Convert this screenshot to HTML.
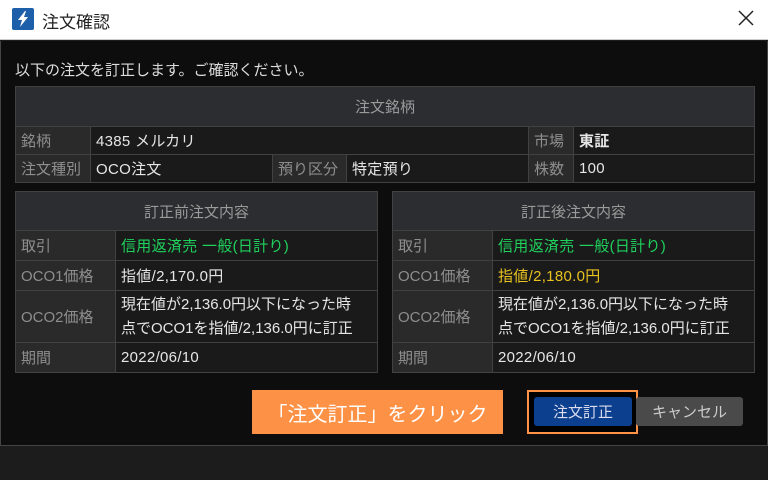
<!DOCTYPE html>
<html><head><meta charset="utf-8"><style>
*{margin:0;padding:0;box-sizing:border-box}
body{width:768px;height:480px;background:#1c1c1c;font-family:"Liberation Sans","Noto Sans CJK JP",sans-serif;position:relative;overflow:hidden;font-size:15px}
.a{position:absolute}
.c{position:absolute;display:flex;align-items:center;padding-left:5px;border:1px solid #414141;white-space:nowrap;overflow:hidden}
.l{background:#2a2a2b;color:#8e8e8e}
.v{background:#1a1a1a;color:#e6e6e6;letter-spacing:0.3px}
.h{background:#2c2d30;color:#9a9a9a;justify-content:center;padding:0}
.g{color:#1fd15c}.y{color:#e8c21f}
</style></head><body>
<div class="a" style="left:0;top:0;width:768px;height:40px;background:#fff;border-bottom:1px solid #ccc"></div>
<svg class="a" style="left:12px;top:8px" width="22" height="22" viewBox="0 0 22 22"><rect width="22" height="22" rx="2" fill="#1d5fa8"/><path d="M13 3 L6 12 H10 L8 19 L16 9 H12 L14 3Z" fill="#fff"/></svg>
<div class="a" style="left:42px;top:8px;font-size:17px;color:#222">注文確認</div>
<svg class="a" style="left:738px;top:10px" width="16" height="16" viewBox="0 0 16 16"><path d="M1 1L15 15M15 1L1 15" stroke="#222" stroke-width="1.5"/></svg>
<div class="a" style="left:0;top:41px;width:768px;height:405px;background:#0d0d0d;border:1px solid #444;border-top:none"></div>
<div class="a" style="left:15px;top:59px;color:#ddd">以下の注文を訂正します。ご確認ください。</div>

<div class="c h" style="left:15px;top:86px;width:740px;height:41px">注文銘柄</div>
<div class="c l" style="left:15px;top:126px;width:76px;height:29px">銘柄</div>
<div class="c v" style="left:90px;top:126px;width:439px;height:29px">4385 メルカリ</div>
<div class="c l" style="left:528px;top:126px;width:46px;height:29px">市場</div>
<div class="c v" style="left:573px;top:126px;width:182px;height:29px;font-weight:bold">東証</div>
<div class="c l" style="left:15px;top:154px;width:76px;height:29px">注文種別</div>
<div class="c v" style="left:90px;top:154px;width:183px;height:29px">OCO注文</div>
<div class="c l" style="left:272px;top:154px;width:75px;height:29px">預り区分</div>
<div class="c v" style="left:346px;top:154px;width:183px;height:29px">特定預り</div>
<div class="c l" style="left:528px;top:154px;width:46px;height:29px">株数</div>
<div class="c v" style="left:573px;top:154px;width:182px;height:29px">100</div>

<div class="c h" style="left:15px;top:191px;width:363px;height:40px">訂正前注文内容</div>
<div class="c l" style="left:15px;top:230px;width:101px;height:31px">取引</div>
<div class="c v g" style="left:115px;top:230px;width:263px;height:31px">信用返済売 一般(日計り)</div>
<div class="c l" style="left:15px;top:260px;width:101px;height:31px">OCO1価格</div>
<div class="c v" style="left:115px;top:260px;width:263px;height:31px">指値/2,170.0円</div>
<div class="c l" style="left:15px;top:290px;width:101px;height:53px">OCO2価格</div>
<div class="c v" style="left:115px;top:290px;width:263px;height:53px;line-height:24px;letter-spacing:0">現在値が2,136.0円以下になった時<br>点でOCO1を指値/2,136.0円に訂正</div>
<div class="c l" style="left:15px;top:342px;width:101px;height:31px">期間</div>
<div class="c v" style="left:115px;top:342px;width:263px;height:31px">2022/06/10</div>

<div class="c h" style="left:392px;top:191px;width:363px;height:40px">訂正後注文内容</div>
<div class="c l" style="left:392px;top:230px;width:101px;height:31px">取引</div>
<div class="c v g" style="left:492px;top:230px;width:263px;height:31px">信用返済売 一般(日計り)</div>
<div class="c l" style="left:392px;top:260px;width:101px;height:31px">OCO1価格</div>
<div class="c v y" style="left:492px;top:260px;width:263px;height:31px">指値/2,180.0円</div>
<div class="c l" style="left:392px;top:290px;width:101px;height:53px">OCO2価格</div>
<div class="c v" style="left:492px;top:290px;width:263px;height:53px;line-height:24px;letter-spacing:0">現在値が2,136.0円以下になった時<br>点でOCO1を指値/2,136.0円に訂正</div>
<div class="c l" style="left:392px;top:342px;width:101px;height:31px">期間</div>
<div class="c v" style="left:492px;top:342px;width:263px;height:31px">2022/06/10</div>

<div class="a" style="left:252px;top:390px;width:251px;height:44px;background:#fd9246;color:#fff;font-size:20px;display:flex;align-items:center;justify-content:center">「注文訂正」をクリック</div>
<div class="a" style="left:527px;top:390px;width:111px;height:44px;border:2px solid #fd9246;background:#000"></div>
<div class="a" style="left:534px;top:397px;width:98px;height:29px;background:#0d3f8f;border-radius:3px;color:#dde;display:flex;align-items:center;justify-content:center">注文訂正</div>
<div class="a" style="left:636px;top:397px;width:107px;height:29px;background:#4a4a4a;border-radius:3px;color:#ccc;display:flex;align-items:center;justify-content:center">キャンセル</div>
</body></html>
